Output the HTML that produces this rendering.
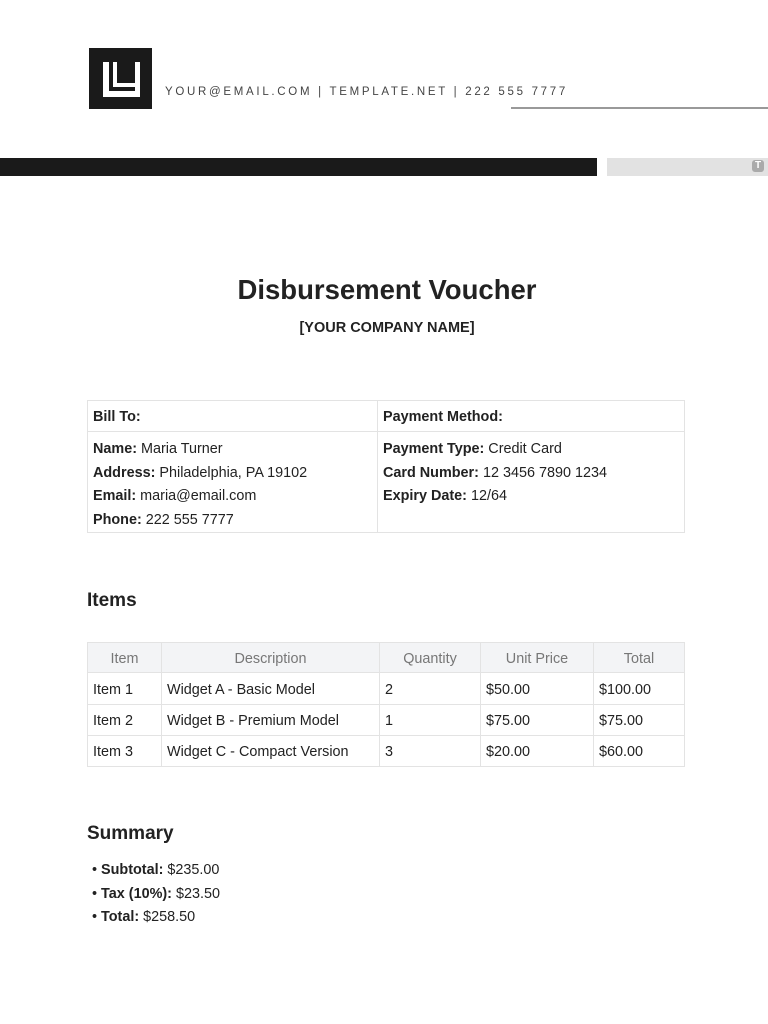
<!DOCTYPE html>
<html><head><style>
body{margin:0;width:768px;height:1024px;background:#fff;position:relative;font-family:"Liberation Sans",sans-serif;color:#222;overflow:hidden}
.a{position:absolute}
table{border-collapse:collapse;position:absolute;font-size:14.4px}
td{border:1px solid #e3e3e3;padding:2px 5px 0}
b{font-weight:bold}
</style></head><body>
<div class="a" style="left:89px;top:48px;width:63px;height:61px;background:#1a1a1a"></div>
<svg class="a" style="left:89px;top:48px" width="63" height="61" fill="#fff">
<rect x="14" y="14" width="6" height="35"/><rect x="14" y="43" width="37" height="6"/>
<rect x="46" y="14" width="5" height="35"/>
<rect x="24" y="14" width="4" height="25"/><rect x="24" y="35" width="27" height="4"/>
</svg>
<div class="a" style="left:165px;top:86px;font-size:11.5px;letter-spacing:2.7px;color:#444">YOUR@EMAIL.COM | TEMPLATE.NET | 222 555 7777</div>
<div class="a" style="left:511px;top:107px;width:257px;height:2px;background:#999"></div>
<div class="a" style="left:0;top:158px;width:597px;height:18px;background:#1a1a1a"></div>
<div class="a" style="left:607px;top:158px;width:161px;height:18px;background:#e2e2e2"></div>
<div class="a" style="left:752px;top:160px;width:12px;height:12px;background:#aaa;border-radius:3px;color:#fff;font-size:10px;font-weight:bold;text-align:center;line-height:12px">T</div>
<div class="a" style="left:0;width:774px;top:274px;text-align:center;font-size:27.5px;font-weight:bold">Disbursement Voucher</div>
<div class="a" style="left:0;width:774px;top:320px;text-align:center;font-size:14.5px;font-weight:bold">[YOUR COMPANY NAME]</div>
<table style="left:87px;top:400px;width:598px">
<tr style="height:31px"><td style="width:279px"><b>Bill To:</b></td><td><b>Payment Method:</b></td></tr>
<tr style="height:101px;vertical-align:top"><td style="line-height:23.5px;padding-top:6px"><b>Name:</b> Maria Turner<br><b>Address:</b> Philadelphia, PA 19102<br><b>Email:</b> maria@email.com<br><b>Phone:</b> 222 555 7777</td><td style="line-height:23.5px;padding-top:6px"><b>Payment Type:</b> Credit Card<br><b>Card Number:</b> 12 3456 7890 1234<br><b>Expiry Date:</b> 12/64</td></tr>
</table>
<div class="a" style="left:87px;top:590px;font-size:19px;font-weight:bold">Items</div>
<table style="left:87px;top:642px;width:598px">
<tr style="height:30px;background:#f3f4f6;color:#777;text-align:center"><td style="width:63px">Item</td><td style="width:207px">Description</td><td style="width:90px">Quantity</td><td style="width:102px">Unit Price</td><td>Total</td></tr>
<tr style="height:32px"><td>Item 1</td><td>Widget A - Basic Model</td><td>2</td><td>$50.00</td><td>$100.00</td></tr>
<tr style="height:31px"><td>Item 2</td><td>Widget B - Premium Model</td><td>1</td><td>$75.00</td><td>$75.00</td></tr>
<tr style="height:31px"><td>Item 3</td><td>Widget C - Compact Version</td><td>3</td><td>$20.00</td><td>$60.00</td></tr>
</table>
<div class="a" style="left:87px;top:823px;font-size:19px;font-weight:bold">Summary</div>
<div class="a" style="left:92px;top:859px;font-size:14.4px;line-height:23.5px">• <b>Subtotal:</b> $235.00<br>• <b>Tax (10%):</b> $23.50<br>• <b>Total:</b> $258.50</div>
</body></html>
